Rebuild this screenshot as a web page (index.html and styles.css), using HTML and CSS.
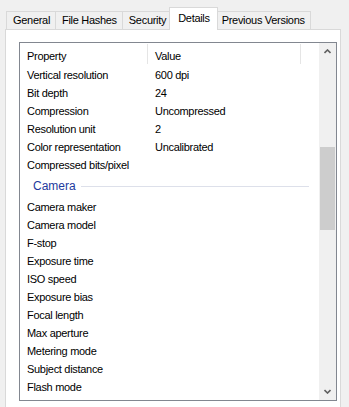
FILE: index.html
```html
<!DOCTYPE html>
<html lang="en">
<head>
    <meta charset="UTF-8">
    <title>Details</title>
    <link rel="stylesheet" href="styles.css">
</head>
<body>
<div class="dialog">
    <div class="tabs">
        <div class="tab">General</div>
        <div class="tab">File Hashes</div>
        <div class="tab">Security</div>
        <div class="tab active">Details</div>
        <div class="tab">Previous Versions</div>
    </div>

    <div class="panel">
        <div class="list">
            <div class="list-main">
                <div class="list-head">
                    <div class="head-cell name">Property</div>
                    <div class="head-cell value">Value</div>
                    <div class="head-cell rest"></div>
                </div>

                <div class="row"><span class="name">Vertical resolution</span><span class="value">600 dpi</span></div>
                <div class="row"><span class="name">Bit depth</span><span class="value">24</span></div>
                <div class="row"><span class="name">Compression</span><span class="value">Uncompressed</span></div>
                <div class="row"><span class="name">Resolution unit</span><span class="value">2</span></div>
                <div class="row"><span class="name">Color representation</span><span class="value">Uncalibrated</span></div>
                <div class="row"><span class="name">Compressed bits/pixel</span><span class="value"></span></div>

                <div class="group"><span class="group-title">Camera</span><span class="group-line"></span></div>

                <div class="row"><span class="name">Camera maker</span><span class="value"></span></div>
                <div class="row"><span class="name">Camera model</span><span class="value"></span></div>
                <div class="row"><span class="name">F-stop</span><span class="value"></span></div>
                <div class="row"><span class="name">Exposure time</span><span class="value"></span></div>
                <div class="row"><span class="name">ISO speed</span><span class="value"></span></div>
                <div class="row"><span class="name">Exposure bias</span><span class="value"></span></div>
                <div class="row"><span class="name">Focal length</span><span class="value"></span></div>
                <div class="row"><span class="name">Max aperture</span><span class="value"></span></div>
                <div class="row"><span class="name">Metering mode</span><span class="value"></span></div>
                <div class="row"><span class="name">Subject distance</span><span class="value"></span></div>
                <div class="row"><span class="name">Flash mode</span><span class="value"></span></div>
            </div>

            <div class="scrollbar">
                <div class="arrow">
                    <svg width="7" height="5" viewBox="0 0 7 5"><path d="M0.5 4 L3.5 1 L6.5 4" fill="none" stroke="#606060" stroke-width="1.6"/></svg>
                </div>
                <div class="track"><div class="thumb"></div></div>
                <div class="arrow">
                    <svg width="7" height="5" viewBox="0 0 7 5"><path d="M0.5 1 L3.5 4 L6.5 1" fill="none" stroke="#606060" stroke-width="1.6"/></svg>
                </div>
            </div>
        </div>
    </div>
</div>
</body>
</html>
```

FILE: styles.css
```css
body {
    margin: 0;
    background-color: #f0f0f0;
    font-family: "Liberation Sans", Arial, sans-serif;
    font-size: 11px;
    letter-spacing: -0.3px;
    color: #000;
    overflow: hidden;
}

.dialog {
    padding-top: 7px;
}

/* tab strip */
.tabs {
    display: flex;
    align-items: flex-end;
    padding-left: 6px;
    height: 22px;
}

.tab {
    height: 17px;
    line-height: 17px;
    padding: 0 5px 0 6px;
    border: 1px solid #d9d9d9;
    border-bottom: none;
    margin-left: -1px;
    background-color: #f0f0f0;
    white-space: nowrap;
}

.tab:first-child {
    margin-left: 0;
}

.tab.active {
    position: relative;
    z-index: 1;
    height: 22px;
    line-height: 20px;
    margin: 0 -2px -1px -3px;
    padding: 0 7px 0 8px;
    background-color: #fff;
}

/* page */
.panel {
    width: 336px;
    height: 378px;
    margin-left: 5px;
    border: 1px solid #d9d9d9;
    border-bottom: none;
    background-color: #fff;
    padding: 12px 0 0 13px;
    box-sizing: border-box;
}

.list {
    display: flex;
    width: 318px;
    height: 359px;
    border: 1px solid #828790;
    box-sizing: border-box;
    overflow: hidden;
}

.list-main {
    flex: 1;
    overflow: hidden;
}

.list-head {
    display: flex;
    height: 23px;
}

.head-cell {
    line-height: 24px;
    padding-left: 7px;
    border-right: 1px solid #e5e5e5;
    margin: 1px 0 2px;
    box-sizing: border-box;
}

.head-cell.name {
    width: 128px;
}

.head-cell.value {
    width: 153px;
}

.head-cell.rest {
    border-right: none;
}

.row {
    display: flex;
    height: 18px;
    line-height: 18px;
    white-space: nowrap;
}

.row .name {
    width: 128px;
    padding-left: 7px;
    box-sizing: border-box;
}

.row .value {
    padding-left: 7px;
}

.group {
    display: flex;
    align-items: center;
    height: 24px;
    padding-left: 13px;
}

.group-title {
    color: #1e3a9e;
    font-size: 12px;
    letter-spacing: 0;
    margin-right: 5px;
}

.group-line {
    width: 228px;
    height: 1px;
    background-color: #dde0ea;
}

/* scrollbar */
.scrollbar {
    width: 17px;
    display: flex;
    flex-direction: column;
    background-color: #f0f0f0;
}

.arrow {
    height: 17px;
    display: flex;
    align-items: center;
    justify-content: center;
}

.track {
    flex: 1;
}

.thumb {
    margin: 87px 0 0 1px;
    width: 15px;
    height: 83px;
    background-color: #cdcdcd;
}
```
